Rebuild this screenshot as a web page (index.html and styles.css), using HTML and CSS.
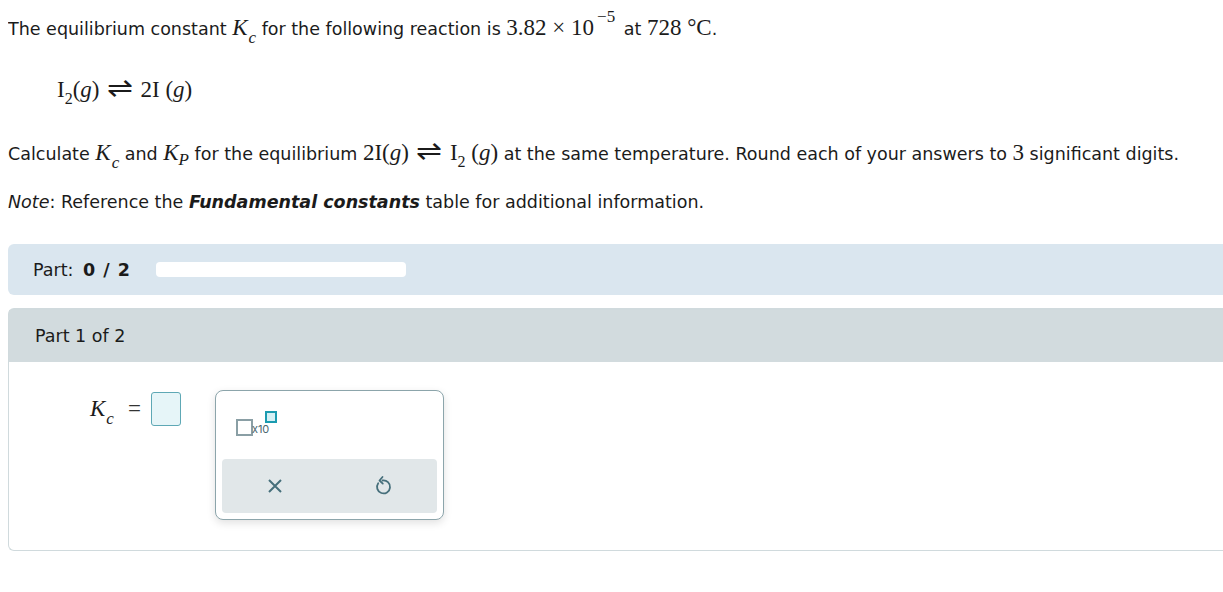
FILE: index.html
```html
<!DOCTYPE html>
<html>
<head>
<meta charset="utf-8">
<link rel="stylesheet" href="styles.css">
</head>
<body>
<div class="page">
  <p class="line l1">The equilibrium constant <span class="m"><i>K</i><sub class="sc">c</sub></span> for the following reaction is <span class="m">3.82 × 10<sup class="sp">−5</sup></span> at <span class="m">728 °C</span>.</p>

  <p class="line eq"><span class="m">I<sub class="s2">2</sub>(<i>g</i>)<span class="arr">⇌</span>2I (<i>g</i>)</span></p>

  <p class="line l2">Calculate <span class="m"><i>K</i><sub class="sc">c</sub></span> and <span class="m"><i>K</i><sub class="sp2">P</sub></span> for the equilibrium <span class="m">2I(<i>g</i>)<span class="arr">⇌</span>I<sub class="s2">2</sub> (<i>g</i>)</span> at the same temperature. Round each of your answers to <span class="m">3</span> significant digits.</p>

  <p class="line l3"><i>Note</i>: Reference the <b><i>Fundamental constants</i></b> table for additional information.</p>

  <div class="progress">
    <span class="plabel">Part: <b>0 / 2</b></span>
    <span class="pbar"></span>
  </div>

  <div class="part">
    <div class="phead">Part 1 of 2</div>
    <div class="pbody">
      <div class="answer">
        <span class="m kc"><i>K</i><sub class="sc">c</sub></span>
        <span class="m eqs">=</span>
        <span class="inbox"></span>
      </div>
      <div class="palette">
        <div class="tools">
          <span class="x10">
            <span class="sq"></span><span class="xt">x10</span><span class="sqs"></span>
          </span>
        </div>
        <div class="btns">
          <svg width="18" height="18" viewBox="0 0 18 18"><path d="M3 3 L15 15 M15 3 L3 15" stroke="#466f7b" stroke-width="2" fill="none"/></svg>
          <svg width="20" height="22" viewBox="0 0 20 22"><path d="M5.2 8.2 A6.5 6.5 0 1 0 9.5 5.5 L9.5 5.5" stroke="#466f7b" stroke-width="1.8" fill="none" stroke-linecap="round"/><path d="M9.5 2 L6.5 5.5 L9.8 8.6" stroke="#466f7b" stroke-width="1.8" fill="none" stroke-linecap="round" stroke-linejoin="round"/></svg>
        </div>
      </div>
    </div>
  </div>
</div>
</body>
</html>
```

FILE: styles.css
```css
html { overflow: hidden; }
body {
  margin: 8px 0 0 8px;
  font-family: "DejaVu Sans", Verdana, sans-serif;
  font-size: 17.5px;
  color: #1b1b1b;
  background: #fff;
}
p { margin: 0; }
.line { height: 40px; line-height: 40px; white-space: nowrap; }
.m { font-family: "Liberation Serif", "Times New Roman", serif; font-size: 23px; }
.m i { font-style: italic; }
sub, sup { line-height: 0; }
.sc { font-size: 17px; vertical-align: -8px; margin-left: 1px; font-style: italic; }
.sp2 { font-size: 17px; vertical-align: -5px; font-style: italic; }
.sp { font-size: 17px; vertical-align: 13px; margin-left: 3px; margin-right: 3px; }
.s2 { font-size: 16px; vertical-align: -7px; }
.arr { display: inline-block; font-size: 27px; margin: 0 9px; line-height: 0; transform: scaleX(1.15); }
.eq { padding-left: 49px; margin-top: 22px; }
.l2 { margin-top: 23px; }
.l3 { margin-top: 9px; }
.progress {
  margin-top: 22px;
  height: 51px;
  background: #dae6ef;
  border-radius: 6px 0 0 6px;
  display: flex;
  align-items: center;
  padding-left: 25px;
}
.plabel { width: 123px; }
.plabel b { margin-left: 4px; letter-spacing: 1px; }
.pbar { width: 250px; height: 15px; background: #fff; border-radius: 4px; }
.part {
  margin-top: 13px;
  border: 1px solid #d0dadd;
  border-top-width: 2px;
  border-right: none;
  border-radius: 6px 0 0 6px;
  height: 240px;
}
.phead {
  background: #d2dbde;
  height: 52px;
  display: flex;
  align-items: center;
  padding-left: 26px;
}
.pbody { display: flex; padding: 28px 0 0 81px; align-items: flex-start; }
.answer { display: flex; align-items: center; height: 36px; margin-top: 1px; }
.kc { margin-right: 14px; }
.eqs { margin-right: 10px; color: #333; }
.inbox {
  width: 28px; height: 32px;
  background: #e6f5f8;
  border: 1.5px solid #5ea8b5;
  border-radius: 3px;
}
.palette {
  margin-left: 34px;
  border: 1px solid #8ca5ab;
  border-radius: 8px;
  box-shadow: 0 3px 8px rgba(0,0,0,0.12);
  background: #fff;
  padding: 6px;
  display: flex; flex-direction: column;
  width: 215px; height: 116px;
}
.tools { height: 62px; position: relative; }
.x10 { position: absolute; left: 14px; top: 14px; width: 44px; height: 30px; }
.sq { position: absolute; left: 0; top: 8px; width: 13px; height: 13px; border: 2px solid #8a9fa5; }
.xt { position: absolute; left: 16px; top: 11px; font-family: "Inter", "Noto Sans", sans-serif; font-size: 11px; color: #4c6770; }
.sqs { position: absolute; left: 29px; top: 0; width: 8px; height: 8px; border: 2px solid #1b9bb0; background: #d4f0f5; }
.btns {
  height: 54px;
  background: #e1e7e9;
  border-radius: 4px;
  display: flex;
  align-items: center;
  justify-content: space-around;
}
```
